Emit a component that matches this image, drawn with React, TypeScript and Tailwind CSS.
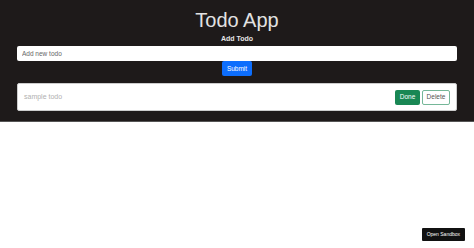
import React from "react";

const App = () => {
  return (
    <div className="w-[474px] h-[248px] bg-white relative font-['Liberation_Sans',Arial,sans-serif]">
      <div className="bg-[#1e1a1a] h-[122px] border-b border-[#555] px-[17px] pt-[10px] flex flex-col items-center">
        <div className="text-[20px] leading-[21px] text-[#e2e2e2]">Todo App</div>
        <div className="text-[7px] font-bold text-[#e6e6e6] mt-[4px] leading-[8px]">Add Todo</div>
        <input
          className="mt-[3px] w-full h-[15px] bg-white rounded-[2px] px-[5px] text-[6.5px] text-[#555] placeholder:text-[#666] outline-none"
          placeholder="Add new todo"
          readOnly
        />
        <button className="bg-[#0d6efd] text-white text-[6.5px] w-[30px] h-[15px] rounded-[2px]">Submit</button>
        <div className="mt-[7px] w-full h-[28px] bg-white rounded-[2px] border border-[#ccc] flex items-center justify-between pl-[6px] pr-[6px]">
          <span className="text-[7px] text-[#b0b0b0]">sample todo</span>
          <div className="flex gap-[2px]">
            <button className="bg-[#198754] text-white text-[6.5px] w-[25px] h-[15px] rounded-[2px]">Done</button>
            <button className="border border-[#198754]/60 text-[#555] text-[6.5px] w-[28px] h-[15px] rounded-[2px]">Delete</button>
          </div>
        </div>
      </div>
      <div className="absolute right-[9px] bottom-[7px] bg-[#111] text-white text-[5px] px-[5px] h-[13px] flex items-center rounded-[1px]">
        Open Sandbox
      </div>
    </div>
  );
};

export default App;
